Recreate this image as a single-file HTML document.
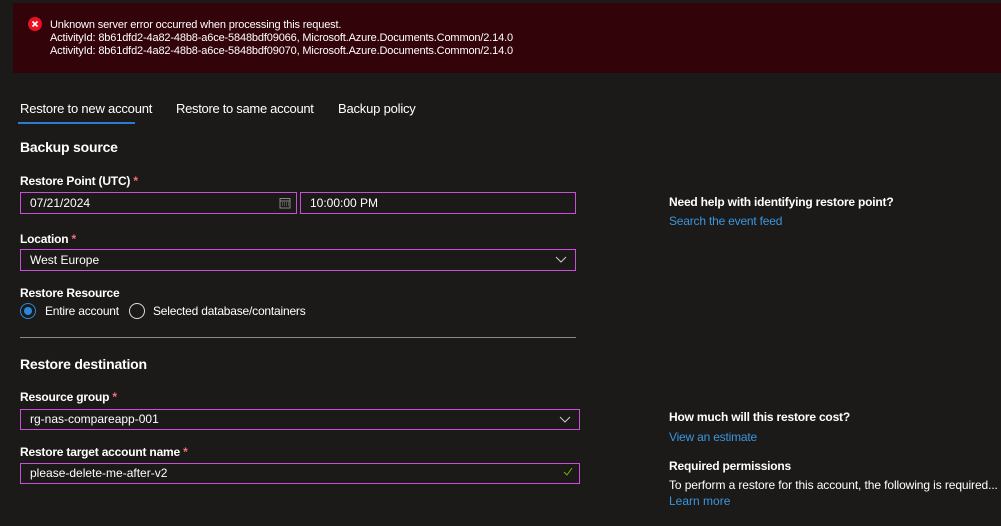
<!DOCTYPE html>
<html><head><meta charset="utf-8"><style>
*{margin:0;padding:0;box-sizing:border-box}
body{width:1001px;height:526px;background:#1b1a19;color:#fff;font-family:"Liberation Sans",sans-serif;font-size:12px;position:relative;overflow:hidden}
.a{position:absolute;white-space:nowrap}
.b{font-weight:bold;letter-spacing:-0.2px}
.inp{position:absolute;border:1px solid #c94fd8;height:22px;padding-left:9px;line-height:20px;font-size:12px;color:#fff}
.star{color:#f1707b}
.link{color:#3a96dd}
</style></head><body>
<div class="a" style="left:13px;top:3px;width:988px;height:70px;background:#320308"></div>
<svg class="a" style="left:28px;top:17px" width="14" height="14" viewBox="0 0 14 14"><circle cx="7" cy="7" r="7" fill="#e81123"/><path d="M4.5 4.5L9.5 9.5M9.5 4.5L4.5 9.5" stroke="#fff" stroke-width="1.6"/></svg>
<div class="a" style="left:50px;top:19px;font-size:11px;line-height:13px;letter-spacing:-0.15px">Unknown server error occurred when processing this request.<br>ActivityId: 8b61dfd2-4a82-48b8-a6ce-5848bdf09066, Microsoft.Azure.Documents.Common/2.14.0<br>ActivityId: 8b61dfd2-4a82-48b8-a6ce-5848bdf09070, Microsoft.Azure.Documents.Common/2.14.0</div>
<div class="a" style="left:20px;top:101px;font-size:13px;letter-spacing:-0.2px">Restore to new account</div>
<div class="a" style="left:18px;top:122px;width:117px;height:2px;background:#2b7bd0"></div>
<div class="a" style="left:176px;top:101px;font-size:13px;letter-spacing:-0.3px">Restore to same account</div>
<div class="a" style="left:338px;top:101px;font-size:13px;letter-spacing:-0.2px">Backup policy</div>
<div class="a b" style="left:20px;top:139px;font-size:14px">Backup source</div>
<div class="a b" style="left:20px;top:174px">Restore Point (UTC) <span class="star">*</span></div>
<div class="inp" style="left:20px;top:192px;width:277px">07/21/2024</div>
<svg class="a" style="left:279px;top:197px" width="12" height="12" viewBox="0 0 12 12"><rect x="1" y="1.5" width="10" height="9.5" fill="none" stroke="#888"/><path d="M1 4h10M3 6h1M5 6h1M7 6h1M9 6h1M3 8h1M5 8h1M7 8h1M9 8h1" stroke="#888"/></svg>
<div class="inp" style="left:300px;top:192px;width:276px">10:00:00 PM</div>
<div class="a b" style="left:20px;top:232px">Location <span class="star">*</span></div>
<div class="inp" style="left:20px;top:249px;width:556px">West Europe</div>
<svg class="a" style="left:555px;top:256px" width="12" height="8"><path d="M1 1l5 5 5-5" fill="none" stroke="#ccc"/></svg>
<div class="a b" style="left:20px;top:286px">Restore Resource</div>
<div class="a" style="left:20px;top:303px;width:16px;height:16px;border:1px solid #2b88d8;border-radius:50%"></div>
<div class="a" style="left:24px;top:307px;width:8px;height:8px;background:#2b88d8;border-radius:50%"></div>
<div class="a" style="left:45px;top:304px;letter-spacing:-0.2px">Entire account</div>
<div class="a" style="left:129px;top:303px;width:16px;height:16px;border:1px solid #ddd;border-radius:50%"></div>
<div class="a" style="left:153px;top:304px;letter-spacing:-0.2px">Selected database/containers</div>
<div class="a" style="left:20px;top:337px;width:556px;height:1px;background:#8a8886"></div>
<div class="a b" style="left:20px;top:356px;font-size:14px">Restore destination</div>
<div class="a b" style="left:20px;top:390px">Resource group <span class="star">*</span></div>
<div class="inp" style="left:20px;top:409px;width:560px;height:21px;line-height:19px">rg-nas-compareapp-001</div>
<svg class="a" style="left:559px;top:416px" width="12" height="8"><path d="M1 1l5 5 5-5" fill="none" stroke="#ccc"/></svg>
<div class="a b" style="left:20px;top:445px">Restore target account name <span class="star">*</span></div>
<div class="inp" style="left:20px;top:463px;width:560px;height:21px;line-height:19px">please-delete-me-after-v2</div>
<svg class="a" style="left:563px;top:467px" width="10" height="9"><path d="M1 5l3 3 5-7" fill="none" stroke="#6bb700"/></svg>
<div class="a b" style="left:669px;top:195px">Need help with identifying restore point?</div>
<div class="a link" style="left:669px;top:214px;letter-spacing:-0.2px">Search the event feed</div>
<div class="a b" style="left:669px;top:410px">How much will this restore cost?</div>
<div class="a link" style="left:669px;top:430px;letter-spacing:-0.2px">View an estimate</div>
<div class="a b" style="left:669px;top:459px">Required permissions</div>
<div class="a" style="left:669px;top:478px;letter-spacing:-0.1px">To perform a restore for this account, the following is required...</div>
<div class="a link" style="left:669px;top:494px">Learn more</div>
</body></html>
